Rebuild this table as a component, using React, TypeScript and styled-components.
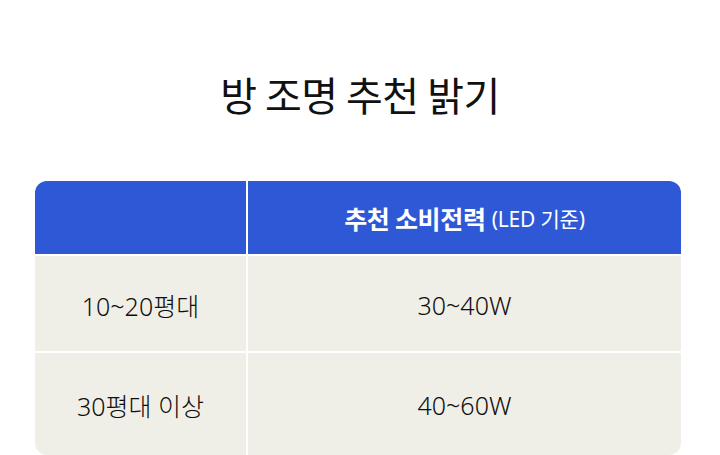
import styled, { createGlobalStyle } from "styled-components"

const GlobalStyle = createGlobalStyle`
  html, body {
    margin: 0;
    padding: 0;
    background: #ffffff;
  }
  body {
    font-family: "Noto Sans", "Noto Sans CJK KR", sans-serif;
    color: #1a1a1a;
  }
`

const rows = [
  { size: "10~20평대", watt: "30~40W", h: 95 },
  { size: "30평대 이상", watt: "40~60W", h: 102 },
]

export default function App() {
  return (
    <Page>
      <GlobalStyle />
      <Title>방 조명 추천 밝기</Title>
      <Table>
        <HeadRow>
          <HeadCell />
          <HeadCell>
            <strong>추천 소비전력</strong>
            <small>(LED 기준)</small>
          </HeadCell>
        </HeadRow>
        {rows.map((r) => (
          <BodyRow key={r.size} $height={r.h}>
            <Cell>{r.size}</Cell>
            <Cell>{r.watt}</Cell>
          </BodyRow>
        ))}
      </Table>
    </Page>
  )
}

const Page = styled.div`
  width: 720px;
  height: 455px;
  overflow: hidden;
  display: flex;
  flex-direction: column;
  align-items: center;
`

const Title = styled.h1`
  margin: 70px 0 0;
  height: 111px;
  font-family: "Noto Sans CJK KR", sans-serif;
  font-size: 40px;
  font-weight: 400;
  line-height: 48px;
  letter-spacing: -0.5px;
  color: #111;
`

const Table = styled.div`
  width: 646px;
  margin-left: -4px;
  border-radius: 12px;
  overflow: hidden;
  display: flex;
  flex-direction: column;
  gap: 2px;
  background: #ffffff;
`

const HeadRow = styled.div`
  display: grid;
  grid-template-columns: 211px 1fr;
  gap: 2px;
  height: 73px;
`

const HeadCell = styled.div`
  background: #2f58d6;
  color: #ffffff;
  display: flex;
  align-items: center;
  justify-content: center;
  gap: 6px;

  strong {
    font-family: "Noto Sans CJK KR", sans-serif;
    font-size: 25px;
    font-weight: 700;
    letter-spacing: -0.3px;
  }
  small {
    font-size: 21px;
    font-weight: 400;
    letter-spacing: -0.2px;
  }
`

const BodyRow = styled.div<{ $height: number }>`
  display: grid;
  grid-template-columns: 211px 1fr;
  gap: 2px;
  height: ${(p) => p.$height}px;
`

const Cell = styled.div`
  background: #f0efe7;
  display: flex;
  align-items: center;
  justify-content: center;
  padding-top: 2px;
  font-size: 25px;
  font-weight: 300;
  color: #0e0e0e;
`
